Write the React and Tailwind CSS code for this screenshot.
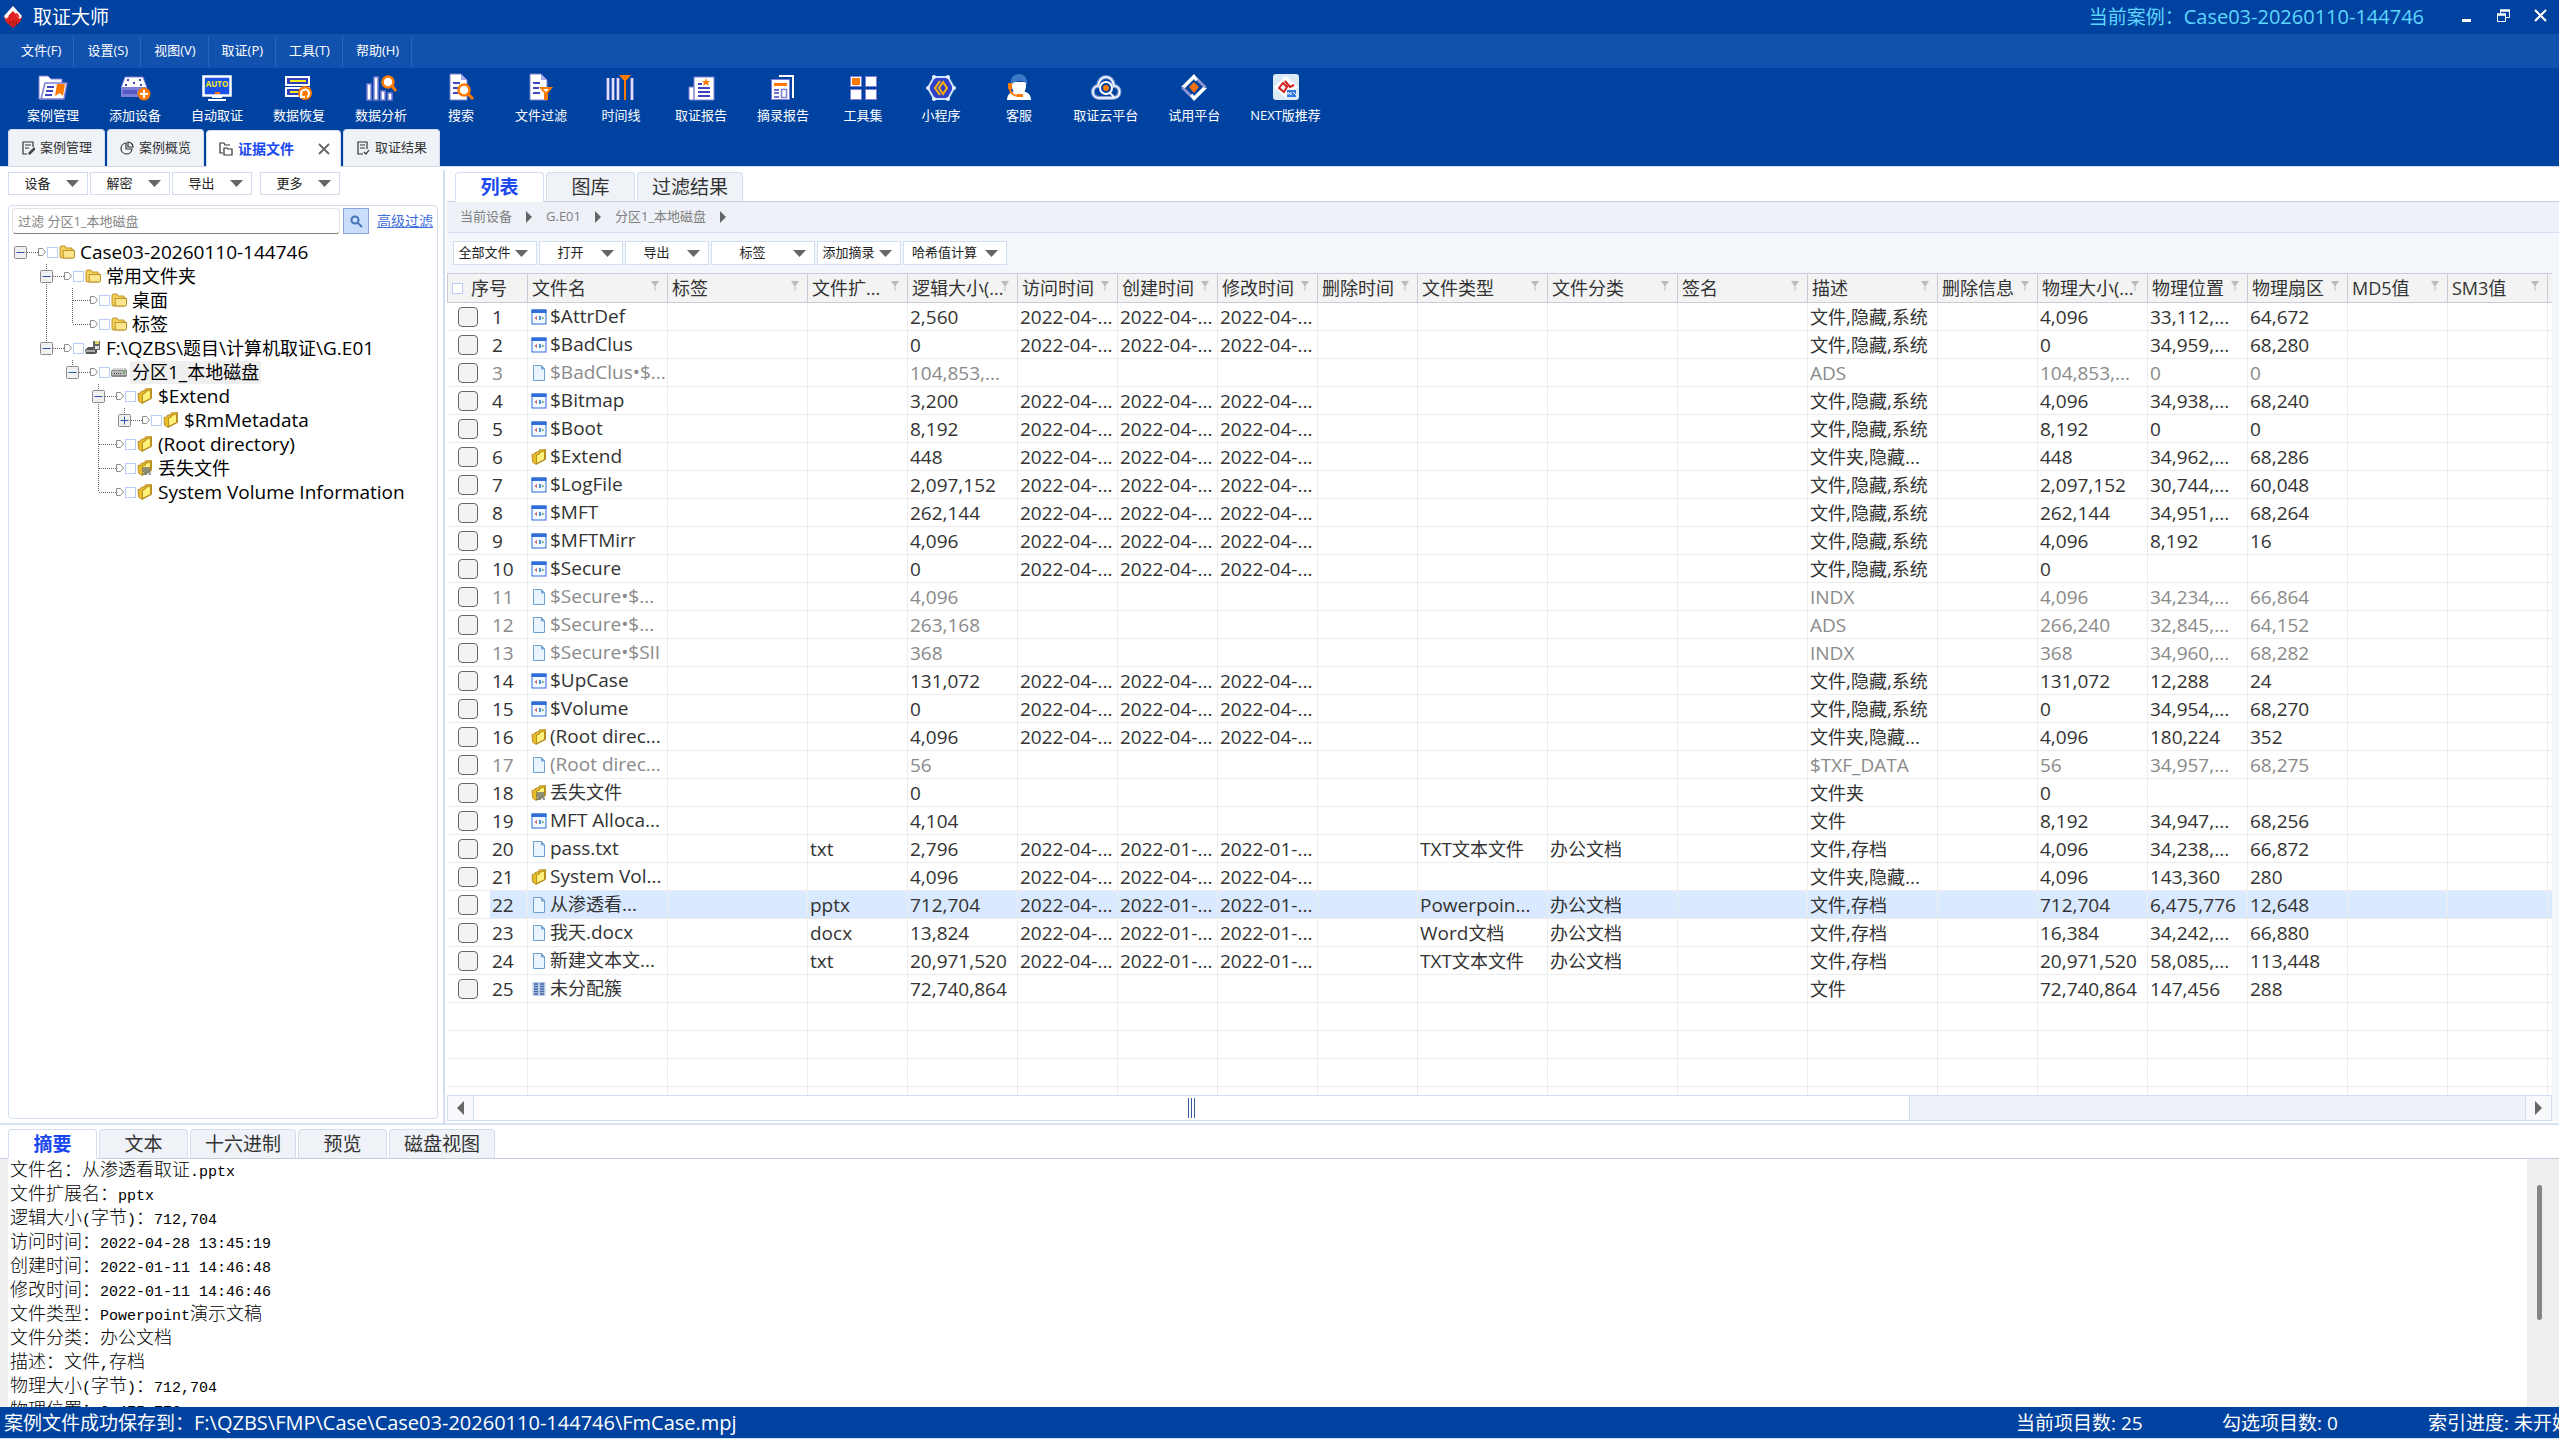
import React, { useState } from "react";

const MENUS = ["文件(F)", "设置(S)", "视图(V)", "取证(P)", "工具(T)", "帮助(H)"];

const FOLDER_PATH = "M1 13V3l1-1h4l1 2h6v2h2v7l-1 1H2z";

function DocShape() {
  return (
    <g>
      <path d="M3 1h11l6 6v20H3z" fill="#fff" stroke="#7d80d6" strokeWidth="1" />
      <path d="M14 1v6h6z" fill="#a9abe8" />
      <path d="M6 10h7M6 15h6M6 20h7" stroke="#3d45c4" strokeWidth="2" />
    </g>
  );
}

const TOOLS = [
  {
    label: "案例管理",
    icon: (
      <g>
        <path d="M2 3h9l3 3h11v5H8L4 26H2z" fill="#fff" stroke="#7d80d6" />
        <path d="M8 10h22l-3 16H4z" fill="#fff" stroke="#7d80d6" strokeWidth="1.5" />
        <path d="M10 14h7M9 18h7M8 22h7" stroke="#3d45c4" strokeWidth="2" />
        <path d="M20 11h8l-2 12-3-3-5 3z" fill="#ff7a00" />
      </g>
    ),
  },
  {
    label: "添加设备",
    icon: (
      <g>
        <path d="M6 4h18l4 11H2z" fill="#fff" stroke="#7d80d6" />
        <path d="M8 6h2v2H8zM20 6h2v2h-2zM14 9h2v2h-2zM6 11h2v2H6zM21 11h2v2h-2z" fill="#3d45c4" />
        <rect x="2" y="14" width="26" height="10" fill="#7d80d6" />
        <rect x="4" y="17" width="14" height="4" fill="#5558c0" />
        <circle cx="25" cy="21" r="6.5" fill="#ff7a00" />
        <path d="M25 17v8M21 21h8" stroke="#fff" strokeWidth="2" />
      </g>
    ),
  },
  {
    label: "自动取证",
    icon: (
      <g>
        <rect x="2.5" y="3.5" width="27" height="19" fill="#1b52e6" stroke="#fff" strokeWidth="2.5" />
        <text x="16" y="14" fontSize="8" fontWeight="700" textAnchor="middle" fill="#f4ea1e">AUTO</text>
        <rect x="14" y="19" width="5" height="2" fill="#ff7a00" />
        <path d="M11 24h10M7 27h18" stroke="#fff" strokeWidth="2" />
      </g>
    ),
  },
  {
    label: "数据恢复",
    icon: (
      <g>
        <rect x="3" y="4" width="23" height="8" fill="#3340b8" stroke="#fff" strokeWidth="2" />
        <path d="M7 8h16" stroke="#f4ea1e" strokeWidth="2" />
        <rect x="3" y="15" width="23" height="8" fill="#3340b8" stroke="#fff" strokeWidth="2" />
        <path d="M7 19h8" stroke="#f4ea1e" strokeWidth="2" />
        <circle cx="22" cy="20" r="7" fill="#ff7a00" />
        <path d="M19 23a4 4 0 1 1 5 1M18 19v5h4" fill="none" stroke="#fff" strokeWidth="2" />
      </g>
    ),
  },
  {
    label: "数据分析",
    icon: (
      <g>
        <path d="M2 11h4v16H2zM9 4h4v23H9zM16 18h4v9h-4zM23 20h4v7h-4z" fill="#fff" stroke="#7d80d6" strokeWidth="1.5" />
        <circle cx="23" cy="9" r="5.5" fill="#fff" stroke="#ff7a00" strokeWidth="2.5" />
        <path d="M27 13l4 5" stroke="#ff7a00" strokeWidth="3" />
      </g>
    ),
  },
  {
    label: "搜索",
    icon: (
      <g transform="translate(2 0)">
        <DocShape />
        <circle cx="17" cy="17" r="5.5" fill="#fff" stroke="#ff7a00" strokeWidth="2.5" />
        <path d="M21 21l5 5" stroke="#ff7a00" strokeWidth="3" />
      </g>
    ),
  },
  {
    label: "文件过滤",
    icon: (
      <g transform="translate(2 0)">
        <DocShape />
        <path d="M12 14h14l-5 6v7h-4v-7z" fill="#ff7a00" />
        <path d="M16 16h6l-3 3z" fill="#fff" />
      </g>
    ),
  },
  {
    label: "时间线",
    icon: (
      <g>
        <path d="M3 5v22M8 5v22M13 5v22M27 5v22" stroke="#7d80d6" strokeWidth="3.5" />
        <path d="M3 5v22M8 5v22M13 5v22M27 5v22" stroke="#fff" strokeWidth="1.5" />
        <path d="M20 5v22" stroke="#ff7a00" strokeWidth="2" />
        <path d="M14 2h12l-6 7z" fill="#ff7a00" />
      </g>
    ),
  },
  {
    label: "取证报告",
    icon: (
      <g>
        <path d="M4 14h5v13H5l-1-1zM9 4h20v23H9z" fill="#fff" stroke="#7d80d6" />
        <path d="M13 11h4M13 15h12M13 19h12M13 23h12" stroke="#3d45c4" strokeWidth="2" />
        <path d="M21 5l1 3h3l-2 2 1 3-3-2-3 2 1-3-2-2h3z" fill="#ff7a00" />
      </g>
    ),
  },
  {
    label: "摘录报告",
    icon: (
      <g>
        <path d="M12 3h14v22" fill="none" stroke="#fff" strokeWidth="2" />
        <rect x="4.5" y="6.5" width="18" height="20" fill="#fff" stroke="#7d80d6" />
        <rect x="7" y="10" width="13" height="3" fill="#ff7a00" />
        <path d="M7 17h5M7 20h5M7 24h5" stroke="#3d45c4" strokeWidth="1.5" />
        <rect x="14.5" y="16.5" width="5" height="8" fill="none" stroke="#7d80d6" strokeWidth="1.5" />
      </g>
    ),
  },
  {
    label: "工具集",
    icon: (
      <g fill="#fff" stroke="#7d80d6">
        <rect x="3.5" y="3.5" width="11" height="10" />
        <rect x="18.5" y="3.5" width="11" height="10" />
        <rect x="3.5" y="16.5" width="11" height="10" />
        <rect x="18.5" y="16.5" width="11" height="10" />
        <rect x="5" y="5" width="8" height="7" fill="#ff7a00" stroke="none" />
      </g>
    ),
  },
  {
    label: "小程序",
    icon: (
      <g>
        <path d="M9 4h14l6 11-6 11H9L3 15z" fill="#3142c8" stroke="#cfe4ff" strokeWidth="2" />
        <path d="M15 8l-5 7 5 7M18 9l-4 6 4 6 4-6z" fill="none" stroke="#ffb400" strokeWidth="2" />
        <g fill="#e6f3ff">
          <circle cx="9" cy="4" r="2" />
          <circle cx="23" cy="4" r="2" />
          <circle cx="29" cy="15" r="2" />
          <circle cx="23" cy="26" r="2" />
          <circle cx="9" cy="26" r="2" />
          <circle cx="3" cy="15" r="2" />
        </g>
      </g>
    ),
  },
  {
    label: "客服",
    icon: (
      <g>
        <path d="M4 27c0-5 3-8 8-9h8c5 1 8 4 8 9z" fill="#fff" />
        <path d="M9 9h14v4c0 5-3 8-7 8s-7-3-7-8z" fill="#fff" />
        <path d="M8 12c-1-7 3-11 8-11s9 4 8 11c-2-3-3-4-5-4-3 0-8 0-11 4z" fill="#3c78c8" />
        <rect x="5" y="10" width="4" height="6" fill="#ff7a00" />
        <path d="M7 16c0 4 4 7 9 7" fill="none" stroke="#ff7a00" strokeWidth="2" />
        <rect x="14" y="21" width="6" height="3" fill="#ff7a00" />
      </g>
    ),
  },
  {
    label: "取证云平台",
    icon: (
      <g fill="none">
        <path d="M9 25c-9-1-7-12-1-12C9 1 23 1 24 13c7 0 8 11-1 12z" stroke="#7f9cd6" strokeWidth="4" />
        <path d="M9 25c-9-1-7-12-1-12C9 1 23 1 24 13c7 0 8 11-1 12z" stroke="#fff" strokeWidth="1.5" />
        <circle cx="16" cy="15" r="6" stroke="#fff" strokeWidth="2" />
        <circle cx="16" cy="15" r="3" fill="#ff7a00" />
        <path d="M20 20l4 4" stroke="#fff" strokeWidth="2" />
      </g>
    ),
  },
  {
    label: "试用平台",
    icon: (
      <g>
        <path d="M3 14L16 1l5 6-4 1-1-2-9 9zM29 15L16 28l-5-6 4-1 1 2 9-9z" fill="#fff" />
        <path d="M20 5l9 9h-4l-6-6zM12 24l-9-9h4l6 6z" fill="#8f95d4" />
        <path d="M16 9l5 5-5 6-5-6z" fill="#f07010" />
      </g>
    ),
  },
  {
    label: "NEXT版推荐",
    icon: (
      <g>
        <rect x="3" y="1" width="26" height="26" rx="3" fill="#dce9f6" />
        <path d="M16 3l12 11-12 11L4 14z" fill="#fff" />
        <path d="M9 15l4-5 4 4-3 5zM15 8l5 6 4-2" fill="none" stroke="#d02020" strokeWidth="2" />
        <path d="M17 17h9v7h-9z" fill="#2f78dd" />
        <path d="M18 22v-3l3 3v-3M23 19l3 3" stroke="#fff" fill="none" />
      </g>
    ),
  },
];

const TREE = [
  { depth: 0, label: "Case03-20260110-144746", icon: "open", toggle: "minus", last: true, guides: [] },
  { depth: 1, label: "常用文件夹", icon: "open", toggle: "minus", guides: [0] },
  { depth: 2, label: "桌面", icon: "open", guides: [0, 1] },
  { depth: 2, label: "标签", icon: "open", last: true, guides: [0, 1] },
  { depth: 1, label: "F:\\QZBS\\题目\\计算机取证\\G.E01", icon: "image", toggle: "minus", last: true, guides: [0] },
  { depth: 2, label: "分区1_本地磁盘", icon: "disk", toggle: "minus", last: true, selected: true, guides: [0, 0] },
  { depth: 3, label: "$Extend", icon: "folder", toggle: "minus", guides: [0, 0, 0] },
  { depth: 4, label: "$RmMetadata", icon: "folder", toggle: "plus", last: true, guides: [0, 0, 0, 1] },
  { depth: 3, label: "(Root directory)", icon: "folder", guides: [0, 0, 0] },
  { depth: 3, label: "丢失文件", icon: "lost", guides: [0, 0, 0] },
  { depth: 3, label: "System Volume Information", icon: "folder", last: true, guides: [0, 0, 0] },
];

const COLUMNS = [
  ["文件名", "w-[140px]"],
  ["标签", "w-[140px]"],
  ["文件扩...", "w-[100px]"],
  ["逻辑大小(...", "w-[110px]"],
  ["访问时间", "w-[100px]"],
  ["创建时间", "w-[100px]"],
  ["修改时间", "w-[100px]"],
  ["删除时间", "w-[100px]"],
  ["文件类型", "w-[130px]"],
  ["文件分类", "w-[130px]"],
  ["签名", "w-[130px]"],
  ["描述", "w-[130px]"],
  ["删除信息", "w-[100px]"],
  ["物理大小(...", "w-[110px]"],
  ["物理位置", "w-[100px]"],
  ["物理扇区", "w-[100px]"],
  ["MD5值", "w-[100px]"],
  ["SM3值", "w-[100px]"],
];

const APR = "2022-04-...";
const JAN = "2022-01-...";
const SYS = "文件,隐藏,系统";

// icon, name, ext, size, accessed, created, modified, type, category, description, physical size, position, sector
const FILES = [
  ["sys", "$AttrDef", "", "2,560", APR, APR, APR, "", "", SYS, "4,096", "33,112,...", "64,672"],
  ["sys", "$BadClus", "", "0", APR, APR, APR, "", "", SYS, "0", "34,959,...", "68,280"],
  ["doc", "$BadClus•$...", "", "104,853,...", "", "", "", "", "", "ADS", "104,853,...", "0", "0"],
  ["sys", "$Bitmap", "", "3,200", APR, APR, APR, "", "", SYS, "4,096", "34,938,...", "68,240"],
  ["sys", "$Boot", "", "8,192", APR, APR, APR, "", "", SYS, "8,192", "0", "0"],
  ["folder", "$Extend", "", "448", APR, APR, APR, "", "", "文件夹,隐藏...", "448", "34,962,...", "68,286"],
  ["sys", "$LogFile", "", "2,097,152", APR, APR, APR, "", "", SYS, "2,097,152", "30,744,...", "60,048"],
  ["sys", "$MFT", "", "262,144", APR, APR, APR, "", "", SYS, "262,144", "34,951,...", "68,264"],
  ["sys", "$MFTMirr", "", "4,096", APR, APR, APR, "", "", SYS, "4,096", "8,192", "16"],
  ["sys", "$Secure", "", "0", APR, APR, APR, "", "", SYS, "0", "", ""],
  ["doc", "$Secure•$...", "", "4,096", "", "", "", "", "", "INDX", "4,096", "34,234,...", "66,864"],
  ["doc", "$Secure•$...", "", "263,168", "", "", "", "", "", "ADS", "266,240", "32,845,...", "64,152"],
  ["doc", "$Secure•$SII", "", "368", "", "", "", "", "", "INDX", "368", "34,960,...", "68,282"],
  ["sys", "$UpCase", "", "131,072", APR, APR, APR, "", "", SYS, "131,072", "12,288", "24"],
  ["sys", "$Volume", "", "0", APR, APR, APR, "", "", SYS, "0", "34,954,...", "68,270"],
  ["folder", "(Root direc...", "", "4,096", APR, APR, APR, "", "", "文件夹,隐藏...", "4,096", "180,224", "352"],
  ["doc", "(Root direc...", "", "56", "", "", "", "", "", "$TXF_DATA", "56", "34,957,...", "68,275"],
  ["lost", "丢失文件", "", "0", "", "", "", "", "", "文件夹", "0", "", ""],
  ["sys", "MFT Alloca...", "", "4,104", "", "", "", "", "", "文件", "8,192", "34,947,...", "68,256"],
  ["doc", "pass.txt", "txt", "2,796", APR, JAN, JAN, "TXT文本文件", "办公文档", "文件,存档", "4,096", "34,238,...", "66,872"],
  ["folder", "System Vol...", "", "4,096", APR, APR, APR, "", "", "文件夹,隐藏...", "4,096", "143,360", "280"],
  ["doc", "从渗透看...", "pptx", "712,704", APR, JAN, JAN, "Powerpoin...", "办公文档", "文件,存档", "712,704", "6,475,776", "12,648"],
  ["doc", "我天.docx", "docx", "13,824", APR, JAN, JAN, "Word文档", "办公文档", "文件,存档", "16,384", "34,242,...", "66,880"],
  ["doc", "新建文本文...", "txt", "20,971,520", APR, JAN, JAN, "TXT文本文件", "办公文档", "文件,存档", "20,971,520", "58,085,...", "113,448"],
  ["free", "未分配簇", "", "72,740,864", "", "", "", "", "", "文件", "72,740,864", "147,456", "288"],
];

const DIM_ROWS = [3, 11, 12, 13, 17];

const SUMMARY = [
  "文件名：从渗透看取证.pptx",
  "文件扩展名：pptx",
  "逻辑大小(字节)：712,704",
  "访问时间：2022-04-28 13:45:19",
  "创建时间：2022-01-11 14:46:48",
  "修改时间：2022-01-11 14:46:46",
  "文件类型：Powerpoint演示文稿",
  "文件分类：办公文档",
  "描述：文件,存档",
  "物理大小(字节)：712,704",
  "物理位置：6,475,776",
];

// Latin and Chinese runs take different sizes
function Mixed({ text, latin = "text-[19px]", cjk = "text-[18px]" }) {
  const runs = text.match(/[\u3000-\u9fff\uff00-\uffef]+|[^\u3000-\u9fff\uff00-\uffef]+/g) || [];
  return runs.map((run, i) => (
    <span key={i} className={/^[\u3000-\u9fff\uff00-\uffef]/.test(run) ? cjk : latin}>
      {run}
    </span>
  ));
}

function FileIcon({ kind }) {
  return (
    <svg viewBox="0 0 16 16" className="w-4 h-4 shrink-0" aria-hidden="true">
      {kind === "sys" && (
        <g>
          <rect x="1" y="1" width="14" height="14" fill="#f3f8ff" stroke="#2f6fd6" />
          <rect x="0.5" y="0.5" width="15" height="3.500" fill="#2f6fd6" />
          <path d="M3.500 9l2.500-2v4z" fill="#d0605a" />
          <path d="M8 7h2v4H8z" fill="#4a8ee0" />
          <path d="M11 8h1.500v2H11z" fill="#5aa860" />
        </g>
      )}
      {kind === "doc" && (
        <g>
          <path d="M2.500 0.500h8l3 3.500v11.500h-11z" fill="#e9f4fe" stroke="#6f9fcc" />
          <path d="M10.500 0.500v3.500h3z" fill="#8db9e0" stroke="#6f9fcc" />
        </g>
      )}
      {(kind === "folder" || kind === "lost") && (
        <g stroke="#a87d10" strokeWidth="0.800">
          <path d="M1 5.500l3-.5v-1.500l4-1v-1.500l6.500-.5v10l-9.500 5-3.500-2.500z" fill="#e8bd2c" />
          <path d="M5.500 6l3-1V3.500l5-1.500v8.500l-8 4z" fill="#fff07a" />
        </g>
      )}
      {kind === "lost" && <path d="M6 7h7v2l1 6h-2l-1-3-1 3H5l2-3H5z" fill="#777" opacity="0.800" />}
      {kind === "open" && (
        <g stroke="#b98a1c" strokeWidth="0.900">
          <path d={FOLDER_PATH} fill="#f1cf5a" />
          <path d="M4 6.500h11.500v7l-1 .5H4.500z" fill="#fbe58c" />
        </g>
      )}
      {kind === "image" && (
        <g>
          <path d="M0 10l3-3h9v6l-2 1H1z" fill="#555" />
          <path d="M1 10h9v2H1z" fill="#aaa" />
          <rect x="8" y="1" width="7" height="9" fill="#666" />
          <path d="M10 1h4v3h-4z" fill="#e2d46a" />
          <path d="M10 6h4v3h-4z" fill="#ddd" />
        </g>
      )}
      {kind === "disk" && (
        <g>
          <path d="M3 4h11l2 2v6l-1 1H1l-1-1V7z" fill="#8b8b8b" />
          <path d="M3 4h11l1 2H1z" fill="#d8d8d8" />
          <path d="M1 7h14v4H1z" fill="#bdbdbd" />
          <path d="M3 9.500h8" stroke="#444" strokeDasharray="1 1" />
          <circle cx="13" cy="8.500" r="1" fill="#3aa53a" />
        </g>
      )}
      {kind === "free" && (
        <g>
          <rect x="1.5" y="1" width="13" height="14" fill="#b9cbe6" />
          <path d="M3 3h4M9 3h4M3 5.500h4M9 5.500h4M3 8h4M9 8h4M3 10.500h4M9 10.500h4M3 13h4M9 13h4" stroke="#4467ac" strokeWidth="1.300" />
        </g>
      )}
    </svg>
  );
}

function DropButton({ label, className }) {
  return (
    <button className={`flex items-center border border-[#d3ddf0] bg-white text-[13px] text-[#222] whitespace-nowrap ${className}`}>
      <span className="flex-1 text-center">{label}</span>
      <svg viewBox="0 0 13 7" className="w-[13px] h-[7px] mr-2 shrink-0" aria-hidden="true">
        <path d="M0 0h13L6.500 7z" fill="#666" />
      </svg>
    </button>
  );
}

function PanelTabs({ tabs, active, onPick, className }) {
  return (
    <div role="tablist" className={`flex items-end gap-[2px] pl-2 border-b border-[#c9cbdc] ${className}`}>
      {tabs.map((t) => (
        <button
          key={t}
          role="tab"
          aria-selected={t === active}
          onClick={() => onPick(t)}
          className={`h-[30px] -mb-px min-w-[89px] px-[14px] border border-[#d3ddf0] rounded-t text-[19px] leading-7 ${
            t === active ? "bg-white border-b-white font-bold text-[#1a48f0]" : "bg-[#eff2f7] border-b-[#c9cbdc] text-[#333]"
          }`}
        >
          {t}
        </button>
      ))}
    </div>
  );
}

function TreeRow({ node }) {
  return (
    <li className="flex h-6 items-center">
      {node.guides.map((on, i) => (
        <svg key={i} viewBox="0 0 26 24" className="w-[26px] h-6 shrink-0" aria-hidden="true">
          {on === 1 && <path d="M6.500 0v24" stroke="#666" strokeDasharray="1 1" />}
        </svg>
      ))}
      <button aria-label={node.label} className="shrink-0">
        <svg viewBox="0 0 24 24" className="w-6 h-6 block" aria-hidden="true">
          <g stroke="#666" strokeDasharray="1 1" fill="none">
            {node.depth > 0 && <path d="M6.500 0v12" />}
            {!node.last && <path d="M6.500 12v12" />}
            <path d="M7 12.500h17" />
          </g>
          {node.toggle && (
            <g>
              <rect x="0.500" y="6.500" width="12" height="12" rx="1" fill="#f0f0f0" stroke="#8c8c8c" />
              <path d={node.toggle === "plus" ? "M2.500 12.500h8M6.500 8.500v8" : "M2.500 12.500h8"} stroke="#2f55a8" />
            </g>
          )}
        </svg>
      </button>
      <svg viewBox="0 0 8 8" className="w-2 h-2 shrink-0" aria-hidden="true">
        <path d="M0.500 0.500h4l3 3.500-3 3.500h-4z" fill="#fff" stroke="#8c8c8c" />
      </svg>
      <input type="checkbox" aria-label={node.label} className="appearance-none w-[11px] h-[11px] border border-[#b9cdfa] bg-white ml-px shrink-0" />
      <span className="ml-px flex shrink-0">
        <FileIcon kind={node.icon} />
      </span>
      <span className={`ml-[3px] px-[2px] h-[23px] leading-[22px] whitespace-nowrap text-black ${node.selected ? "bg-[#efefef]" : ""}`}>
        <Mixed text={node.label} />
      </span>
    </li>
  );
}

function FilterMark() {
  return (
    <svg viewBox="0 0 8 10" className="w-2 h-[10px] shrink-0 mb-1" aria-hidden="true">
      <path d="M0 0h8L4.500 5v5h-1V5z" fill="#bbb" />
    </svg>
  );
}

function FileTable({ selected, onSelect }) {
  const cell = "border-r border-b border-[#ececec] p-0 pl-[2px] whitespace-nowrap overflow-hidden";
  return (
    <table className="w-full table-fixed border-separate border-spacing-0 text-left leading-6">
      <colgroup>
        <col className="w-[43px]" />
        <col className="w-[38px]" />
        {COLUMNS.map(([name, width]) => (
          <col key={name} className={width} />
        ))}
        <col />
      </colgroup>
      <thead>
        <tr className="h-[30px] bg-[#f3f3f3] text-[18px] text-[#333]">
          <th colSpan={2} className="border-y border-r border-[#cacad9] border-l p-0 font-normal">
            <label className="flex items-center">
              <input type="checkbox" className="appearance-none w-[11px] h-[11px] border border-[#b9cdfa] bg-white ml-1 mr-2" />
              序号
            </label>
          </th>
          {COLUMNS.map(([name]) => (
            <th key={name} className="border-y border-r border-[#cacad9] p-0 font-normal">
              <div className="flex items-center pl-1 pr-2">
                <span className="flex-1 min-w-0 whitespace-nowrap">{name}</span>
                <FilterMark />
              </div>
            </th>
          ))}
          <th className="border-y border-[#cacad9] p-0"></th>
        </tr>
      </thead>
      <tbody>
        {FILES.map((f, i) => {
          const n = i + 1;
          const [icon, name, ext, size, accessed, created, modified, type, category, desc, psize, pos, sector] = f;
          const values = ["", ext, size, accessed, created, modified, "", type, category, "", desc, "", psize, pos, sector, "", ""];
          const on = n === selected;
          return (
            <tr key={n} onClick={() => onSelect(n)} className={`h-7 ${DIM_ROWS.includes(n) ? "text-[#8a8a8a]" : "text-[#333]"}`}>
              <td className="border-b border-[#ececec] p-0 pl-[11px]">
                <input
                  type="checkbox"
                  aria-label={`${n} ${name}`}
                  className="block appearance-none w-5 h-5 rounded border border-[#666] bg-[#f3f3f3]"
                />
              </td>
              <td className={`border-r border-b border-[#ececec] p-0 pl-[2px] text-[19px] leading-6 ${on ? "bg-[#d9e9ff]" : ""}`}>{n}</td>
              <td className={`${cell} ${on ? "bg-[#d9e9ff]" : ""}`}>
                <div className="flex h-6 items-center pl-px">
                  <FileIcon kind={icon} />
                  <span className="pl-[3px]">
                    <Mixed text={name} />
                  </span>
                </div>
              </td>
              {values.map((v, j) => (
                <td key={j} className={`${cell} ${on ? "bg-[#d9e9ff]" : ""}`}>
                  <div className="h-6">
                    <Mixed text={v} />
                  </div>
                </td>
              ))}
              <td className={`border-b border-[#ececec] p-0 ${on ? "bg-[#d9e9ff]" : ""}`}></td>
            </tr>
          );
        })}
        {[1, 2, 3, 4].map((k) => (
          <tr key={k} className="h-7">
            <td className="border-b border-[#ececec] p-0"></td>
            <td className="border-r border-b border-[#ececec] p-0"></td>
            {COLUMNS.map(([name]) => (
              <td key={name} className={cell}></td>
            ))}
            <td className="border-b border-[#ececec] p-0"></td>
          </tr>
        ))}
      </tbody>
    </table>
  );
}

function WorkTab({ label, icon, active, className = "" }) {
  return (
    <div className={`flex h-[37px] items-center rounded-t border border-b-0 border-[#d3ddf0] ${active ? "bg-white w-[135px]" : "bg-[#eff2f7] w-[97px]"} ${className}`}>
      <button className="flex flex-1 items-center gap-[5px] pl-3 whitespace-nowrap">
        <svg viewBox="0 0 14 14" className="w-[14px] h-[14px]" fill="none" stroke="#333" strokeWidth="1.2" aria-hidden="true">
          {icon}
        </svg>
        <span className={active ? "text-sm font-bold text-[#1a48f0]" : "text-[13px] text-[#333]"}>{label}</span>
      </button>
      {active && (
        <button aria-label="关闭" className="mr-[10px]">
          <svg viewBox="0 0 12 12" className="w-3 h-3" aria-hidden="true">
            <path d="M1 1l10 10M11 1L1 11" stroke="#666" strokeWidth="1.800" />
          </svg>
        </button>
      )}
    </div>
  );
}

function Crumb({ children }) {
  return (
    <li className="flex items-center">
      <a href="#">{children}</a>
      <svg viewBox="0 0 6 12" className="w-[6px] h-3 mx-[14px]" aria-hidden="true">
        <path d="M0 0l6 6-6 6z" fill="#666" />
      </svg>
    </li>
  );
}

export default function App() {
  const [view, setView] = useState("列表");
  const [detail, setDetail] = useState("摘要");
  const [selected, setSelected] = useState(22);

  return (
    <div className="h-screen flex flex-col overflow-hidden bg-white font-['Open_Sans','Noto_Sans_CJK_SC',sans-serif]">
      <header className="bg-[#00429f] text-white">
        <div className="flex h-[34px] items-center text-[19px] leading-7">
          <svg viewBox="0 0 20 24" className="w-5 h-6 ml-[3px]" aria-hidden="true">
            <path d="M10 1l9 11-2 5-7 6-7-6-2-5z" fill="#e12222" />
            <path d="M10 1l9 10-2 3-7-7-7 7-2-3z" fill="#fff" />
            <path d="M6 11l4-4 2 2-4 5M11 12l3-3 2 3" fill="none" stroke="#e12222" strokeWidth="1.500" />
            <path d="M7 16v4M10 15v7M13 16v4" stroke="#8f1010" />
          </svg>
          <h1 className="ml-[10px]">取证大师</h1>
          <p className="ml-auto text-[#5fd6ff]">
            <Mixed text="当前案例：Case03-20260110-144746" latin="text-[20px]" cjk="text-[19px]" />
          </p>
          <div className="flex items-center gap-6 ml-9 mr-3">
            <button aria-label="最小化">
              <svg viewBox="0 0 13 13" className="w-[13px] h-[13px]"><path d="M2 9.500h9" stroke="#fff" strokeWidth="3" /></svg>
            </button>
            <button aria-label="还原">
              <svg viewBox="0 0 13 13" className="w-[13px] h-[13px] mb-1" fill="none" stroke="#fff">
                <path d="M3.500 4V1.500h9v7H9" />
                <path d="M3 1.500h10M0 5.500h9" strokeWidth="2.500" />
                <path d="M0.500 5v7.500h8V5" />
              </svg>
            </button>
            <button aria-label="关闭窗口">
              <svg viewBox="0 0 13 13" className="w-[13px] h-[13px] mb-1"><path d="M1 1l11 11M12 1L1 12" stroke="#fff" strokeWidth="2.200" /></svg>
            </button>
          </div>
        </div>
        <nav className="flex h-[34px] items-center gap-px bg-[#1152ae] pl-[9px] text-[13px]">
          {MENUS.map((m) => (
            <button key={m} className="h-[30px] px-3 border-r border-[#2a66bb]">{m}</button>
          ))}
        </nav>
        <div className="flex h-[61px] pl-3 pt-[5px]">
          {TOOLS.map((t) => (
            <button key={t.label} className="flex h-[52px] flex-col items-center gap-[6px] min-w-[78px] px-[15px] text-[13px] leading-4 whitespace-nowrap">
              <svg viewBox="0 0 32 28" className="w-8 h-7 overflow-visible" aria-hidden="true">{t.icon}</svg>
              {t.label}
            </button>
          ))}
        </div>
        <div className="flex items-end gap-[2px] pl-2 border-b border-[#d3d7e6]">
          <WorkTab label="案例管理" icon={<path d="M6 13H2V1h10v5M4 4h6M4 7h4M8 12l5-5 1 1-5 5H8z" />} />
          <WorkTab label="案例概览" icon={<path d="M6 2a5.500 5.500 0 1 0 6 6H6zM8 1v5h5a5 5 0 0 0-5-5z" />} />
          <WorkTab label="证据文件" active className="-mb-px" icon={<path d="M4 11H1V1h4l1 2h5M5 6h3l1 1h4v6H5z" />} />
          <WorkTab label="取证结果" icon={<path d="M7 13H2V1h9v7M4 4h5M4 7h5M8 11l2 2 3-4" />} />
        </div>
      </header>

      <main className="flex flex-1 min-h-0 flex-col">
        <div className="flex flex-1 min-h-0">
          <aside className="flex w-[443px] shrink-0 flex-col pl-2 pr-[5px] pt-[5px] pb-1">
            <div className="flex gap-[2px] mb-[10px]">
              <DropButton label="设备" className="w-20 h-[23px]" />
              <DropButton label="解密" className="w-20 h-[23px]" />
              <DropButton label="导出" className="w-20 h-[23px]" />
              <DropButton label="更多" className="w-20 h-[23px] ml-[6px]" />
            </div>
            <div className="flex-1 min-h-0 rounded border border-[#d3ddf0] pl-[3px] pt-[2px]">
              <div className="flex items-center">
                <input
                  aria-label="过滤"
                  placeholder="过滤 分区1_本地磁盘"
                  className="w-[328px] h-[26px] pl-[5px] text-[13px] border border-[#e3e3e3] border-b-[#808080] rounded-sm placeholder:text-[#858585]"
                />
                <button aria-label="搜索" className="flex w-[26px] h-[26px] ml-[3px] items-center justify-center border border-[#88a8d8] bg-[#c9defa]">
                  <svg viewBox="0 0 14 14" className="w-[14px] h-[14px]" fill="none" stroke="#4573b4" strokeWidth="2">
                    <circle cx="6" cy="6" r="3.500" />
                    <path d="M9 9l4 4" />
                  </svg>
                </button>
                <a href="#" className="ml-2 text-sm text-[#3f6fdc] underline whitespace-nowrap">高级过滤</a>
              </div>
              <ul className="pl-[2px] pt-[6px]">
                {TREE.map((node) => (
                  <TreeRow key={node.label} node={node} />
                ))}
              </ul>
            </div>
          </aside>

          <div className="w-[2px] mt-[3px] shrink-0 bg-[#d3dff0]"></div>

          <section className="flex flex-1 min-w-0 flex-col pl-[2px] pb-[2px]">
            <PanelTabs tabs={["列表", "图库", "过滤结果"]} active={view} onPick={setView} className="pt-[5px]" />
            <nav className="bg-[#eef1f7] border-b border-[#d3ddf0]">
              <ol className="flex h-[30px] items-center pl-[13px] text-[13px] text-[#808080]">
                <Crumb>当前设备</Crumb>
                <Crumb>G.E01</Crumb>
                <Crumb>分区1_本地磁盘</Crumb>
              </ol>
            </nav>
            <div className="flex gap-[2px] bg-[#f3f7fc] pt-2 pb-2 pl-[6px]">
              <DropButton label="全部文件" className="w-[84px] h-6" />
              <DropButton label="打开" className="w-[84px] h-6" />
              <DropButton label="导出" className="w-[84px] h-6" />
              <DropButton label="标签" className="w-[104px] h-6" />
              <DropButton label="添加摘录" className="w-[84px] h-6" />
              <DropButton label="哈希值计算" className="w-[104px] h-6" />
            </div>
            <div className="flex flex-1 min-h-0 flex-col bg-[#f3f7fc] pr-[7px]">
              <div className="flex-1 min-h-0 overflow-hidden bg-white">
                <FileTable selected={selected} onSelect={setSelected} />
              </div>
              <div className="flex h-[26px] shrink-0 border border-[#d3ddf0] bg-[#eef1f7]">
                <button aria-label="向左滚动" className="flex w-[26px] items-center justify-center border-r border-[#d3ddf0] bg-[#f7f9fc]">
                  <svg viewBox="0 0 7 14" className="w-[7px] h-[14px]"><path d="M7 0v14L0 7z" fill="#666" /></svg>
                </button>
                <div className="flex-1">
                  <div className="flex w-[70%] h-full items-center justify-center gap-[2px] border-r border-[#d3ddf0] bg-white">
                    <span className="w-px h-5 bg-[#3a5fa0]"></span>
                    <span className="w-px h-5 bg-[#3a5fa0]"></span>
                    <span className="w-px h-5 bg-[#3a5fa0]"></span>
                  </div>
                </div>
                <button aria-label="向右滚动" className="flex w-[26px] items-center justify-center border-l border-[#d3ddf0] bg-[#f7f9fc]">
                  <svg viewBox="0 0 7 14" className="w-[7px] h-[14px]"><path d="M0 0v14l7-7z" fill="#666" /></svg>
                </button>
              </div>
            </div>
          </section>
        </div>

        <section className="flex h-[284px] shrink-0 flex-col border-t-2 border-[#d5e2f0]">
          <PanelTabs tabs={["摘要", "文本", "十六进制", "预览", "磁盘视图"]} active={detail} onPick={setDetail} className="pt-1" />
          <div className="flex flex-1 min-h-0 bg-[#efefef] pl-2">
            <div className="flex-1 overflow-hidden bg-white pl-[2px] leading-6 text-black font-['Liberation_Mono','Noto_Sans_CJK_SC',monospace]">
              {SUMMARY.map((line) => (
                <p key={line} className="h-6 whitespace-pre">
                  <Mixed text={line} latin="text-[15px]" cjk="text-[18px] font-light" />
                </p>
              ))}
            </div>
            <div className="w-8 pl-[10px] pt-[26px]">
              <div className="w-[5px] h-[135px] rounded-full bg-[#858585]"></div>
            </div>
          </div>
        </section>
      </main>

      <footer className="flex h-8 shrink-0 items-center border-b border-[#d5e2f0] bg-[#00429f] pl-1 text-[19px] leading-7 text-white whitespace-nowrap overflow-hidden">
        <p className="flex-1">
          <Mixed text="案例文件成功保存到：F:\QZBS\FMP\Case\Case03-20260110-144746\FmCase.mpj" latin="text-[20px]" cjk="text-[19px]" />
        </p>
        <p className="w-[206px]">当前项目数: 25</p>
        <p className="w-[206px]">勾选项目数: 0</p>
        <p className="w-[131px] overflow-hidden">索引进度: 未开始</p>
      </footer>
    </div>
  );
}
